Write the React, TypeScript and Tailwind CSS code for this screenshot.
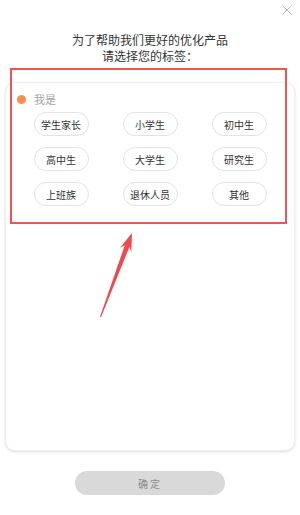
export default function App() {
  // tags user can pick
  const tags = ["学生家长", "小学生", "初中生", "高中生", "大学生", "研究生", "上班族", "退休人员", "其他"];

  return (
    <div
      className="relative flex h-[515px] w-[300px] flex-col items-center bg-white"
      style={{ fontFamily: '"Noto Sans CJK SC", "Noto Sans", sans-serif' }}
    >
      <button className="absolute right-[8px] top-[5px] h-[10px] w-[10px]">
        <svg viewBox="0 0 10 10" className="h-[10px] w-[10px]">
          <path d="M0.5 0.5 L9.5 9.5 M9.5 0.5 L0.5 9.5" stroke="#bdbdbd" strokeWidth="1" />
        </svg>
      </button>

      <h2 className="mt-[32px] text-center text-[12px] leading-[16px] font-normal text-[#333]">
        为了帮助我们更好的优化产品
        <br />
        请选择您的标签：
      </h2>

      <section className="mt-[18px] h-[369px] w-[290px] rounded-[10px] border border-[#f0f0f0] bg-white pt-[9px] shadow-[0_1px_3px_rgba(0,0,0,0.14)]">
        <div className="flex items-center gap-[8px] pl-[11px]">
          <span className="h-[9px] w-[9px] rounded-full bg-[#ff8c4d]" />
          <span className="text-[11px] leading-[15px] text-[#a6a6a6]">我是</span>
        </div>

        <div className="mt-[5px] grid grid-cols-[55px_55px_55px] justify-center gap-x-[34px] gap-y-[11px]">
          {tags.map((t) => (
            <div
              key={t}
              className="flex h-[24px] items-center justify-center rounded-full border border-[#e3e3e3] text-[10px] text-[#333]"
            >
              {t}
            </div>
          ))}
        </div>
      </section>

      <button className="mt-[20px] flex h-[24px] w-[150px] items-center justify-center rounded-full bg-[#d9d9d9] text-[10px] tracking-[2px] text-[#8c8c8c]">
        确定
      </button>

      {/* annotation overlay */}
      <div className="pointer-events-none absolute left-[10px] top-[68px] h-[156px] w-[277px] border-[2.5px] border-[#f05457]" />
      <svg className="pointer-events-none absolute left-0 top-0" width="300" height="515">
        <polygon
          points="100,316.8 124.8,245.2 120.1,247.7 132,233 131.3,251.9 129.4,247 101,317.2"
          fill="#f2474b"
        />
      </svg>
    </div>
  );
}
